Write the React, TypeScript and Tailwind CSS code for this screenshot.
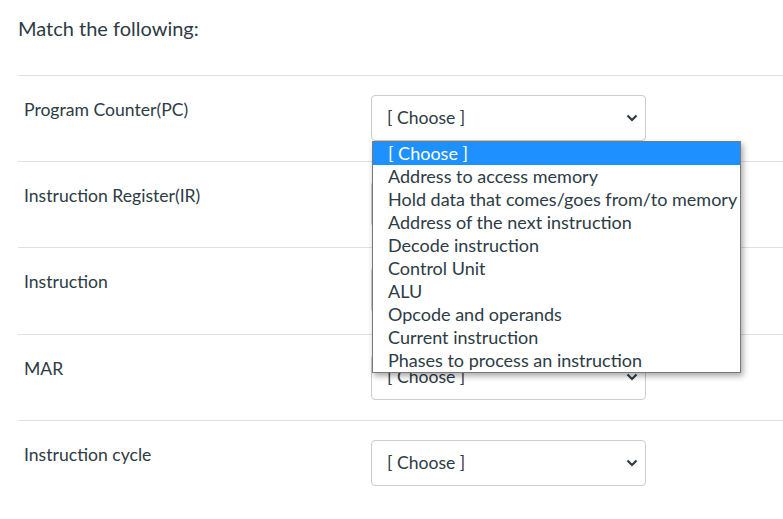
const rows = [
  { label: "Program Counter(PC)", h: "h-[86px]" },
  { label: "Instruction Register(IR)", h: "h-[86px]" },
  { label: "Instruction", h: "h-[87px]" },
  { label: "MAR", h: "h-[86px]" },
  { label: "Instruction cycle", h: "h-[86px]" },
];

const options = [
  "[ Choose ]",
  "Address to access memory",
  "Hold data that comes/goes from/to memory",
  "Address of the next instruction",
  "Decode instruction",
  "Control Unit",
  "ALU",
  "Opcode and operands",
  "Current instruction",
  "Phases to process an instruction",
];

function Chevron() {
  return (
    <svg width="12" height="8" viewBox="0 0 12 8" className="text-[#2d3b45]">
      <path d="M1.5 1.5 L6 6 L10.5 1.5" fill="none" stroke="currentColor" strokeWidth="2.2" />
    </svg>
  );
}

function FakeSelect({ open }: { open?: boolean }) {
  return (
    <div className="relative">
      <div className="flex h-[46px] w-[275px] items-center justify-between rounded-[4px] border border-[#c7cdd1] bg-white pl-[15px] pr-[7px] text-[17.6px] text-[#2d3b45]">
        <span>[ Choose ]</span>
        <Chevron />
      </div>
      {open && (
        <ul className="absolute left-[1px] top-full z-10 w-[369px] border border-[#7a7a7a] bg-white text-[18px] text-[#2d3b45] shadow-[2px_3px_6px_rgba(0,0,0,0.35)]">
          {options.map((o, i) => (
            <li
              key={o}
              className={
                i === 0
                  ? "h-[23px] bg-[#1e90ff] pl-[15px] leading-[23px] text-white"
                  : "h-[23px] pl-[15px] leading-[23px]"
              }
            >
              {o}
            </li>
          ))}
        </ul>
      )}
    </div>
  );
}

export default function App() {
  return (
    <div className="h-[519px] w-[783px] overflow-hidden bg-white font-['Lato',sans-serif] text-[#2d3b45]">
      <h2 className="pl-[18px] pt-[16px] text-[20px] leading-[24px]">Match the following:</h2>

      <div className="ml-[18px] mt-[35px]">
        {rows.map((r, i) => (
          <div key={r.label} className={`flex border-t border-[#dde1e4] ${r.h}`}>
            <div className="w-[353px] pl-[6px] pt-[23px] text-[17.6px] leading-[21px]">{r.label}</div>
            <div className="pt-[19px]">
              <FakeSelect open={i === 0} />
            </div>
          </div>
        ))}
      </div>
    </div>
  );
}
